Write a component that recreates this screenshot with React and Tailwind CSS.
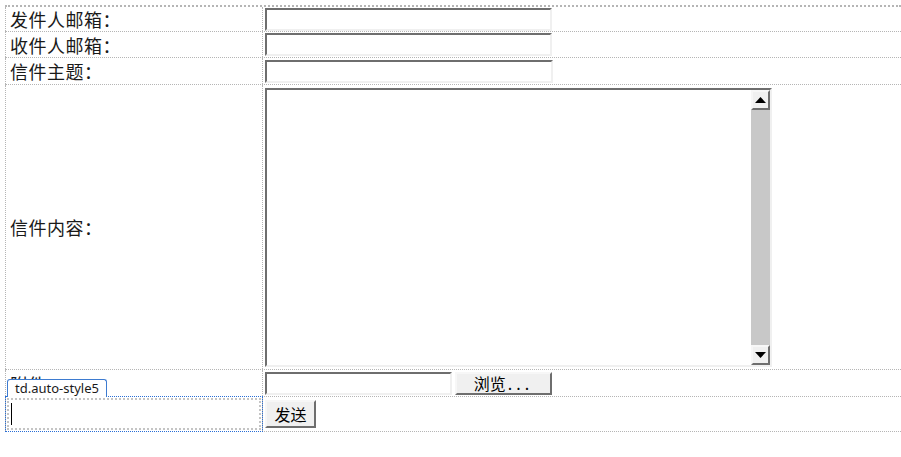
const cjk = { fontFamily: '"Noto Sans CJK SC", "Liberation Serif", serif' };

const Row = ({ h, label, children, top = false, left, middle = 'items-center' }) => (
  <div
    className={`grid grid-cols-[258px_1fr] border-b border-dotted border-[#b5b5b5] ${top ? 'border-t-2' : ''}`}
    style={{ height: h }}
  >
    <div className={`flex items-center pl-[4px] border-l border-r border-dotted border-[#b5b5b5] relative`}>
      {left || (
        <span className="text-[18px] leading-none text-[#1a1a1a] tracking-[0.5px]" style={cjk}>
          {label}
        </span>
      )}
    </div>
    <div className={`flex ${middle} pl-[2px]`}>{children}</div>
  </div>
);

const Inset = ({ w, h = 22 }) => (
  <div
    className="bg-white border-2 border-t-[#6e6e6e] border-l-[#6e6e6e] border-b-[#f0f0f0] border-r-[#f0f0f0]"
    style={{ width: w, height: h }}
  />
);

const Btn = ({ w, h, children, cls = '' }) => (
  <div
    className={`flex items-center justify-center bg-[#f0f0f0] border-2 border-t-[#f7f7f7] border-l-[#f7f7f7] border-b-[#6e6e6e] border-r-[#6e6e6e] text-[16px] text-black ${cls}`}
    style={{ width: w, height: h, ...cjk }}
  >
    {children}
  </div>
);

const Arrow = ({ up }) => (
  <div className="h-[20px] w-[19px] flex items-center justify-center bg-[#f0f0f0] border-2 border-t-[#f7f7f7] border-l-[#f7f7f7] border-b-[#6e6e6e] border-r-[#6e6e6e]">
    <svg width="11" height="6" viewBox="0 0 11 6">
      {up ? <polygon points="5.5,0 11,6 0,6" fill="#000" /> : <polygon points="0,0 11,0 5.5,6" fill="#000" />}
    </svg>
  </div>
);

export default function App() {
  return (
    <div className="w-[901px] h-[457px] bg-white overflow-hidden pt-[5px] pl-[5px]">
      <div className="w-[896px] border-dotted border-[#b5b5b5]">
        <Row h={27} label="发件人邮箱：" top>
          <Inset w={287} h={23} />
        </Row>
        <Row h={26} label="收件人邮箱：">
          <Inset w={287} h={23} />
        </Row>
        <Row h={27} label="信件主题：">
          <Inset w={288} h={23} />
        </Row>
        <Row h={285} label="信件内容：">
          <div className="flex w-[507px] h-[279px] bg-white border-2 border-t-[#6e6e6e] border-l-[#6e6e6e] border-b-[#f0f0f0] border-r-[#f0f0f0]">
            <div className="flex-1" />
            <div className="w-[19px] flex flex-col bg-[#c8c8c8]">
              <Arrow up />
              <div className="flex-1" />
              <Arrow />
            </div>
          </div>
        </Row>
        <Row
          h={27}
          left={
            <>
              <span className="text-[18px] leading-none text-[#1a1a1a] mt-[2px]" style={cjk}>
                附件：
              </span>
              <div
                className="absolute left-[1px] bottom-[-1px] h-[18px] px-[7px] flex items-center bg-white border border-b-0 border-[#3d7bd0] rounded-t-[3px] text-[13px] text-[#1a1a1a] z-10"
                style={{ fontFamily: '"Noto Sans", "Liberation Sans", sans-serif' }}
              >
                td.auto-style5
              </div>
            </>
          }
        >
          <Inset w={187} h={23} />
          <Btn w={97} h={23} cls="ml-[3px]">
            浏览<span className="tracking-[4px] ml-[2px]">...</span>
          </Btn>
        </Row>
        <Row
          h={35}
          middle="items-center"
          left={
            <div className="absolute inset-[-1px] border border-dotted border-[#2a6fd6] p-[1px]">
              <div className="h-full w-full border-2 border-dotted border-[#c4c4c4] flex items-center pl-[2px]">
                <div className="w-[1px] h-[22px] bg-black" />
              </div>
            </div>
          }
        >
          <Btn w={51} h={28}>发送</Btn>
        </Row>
      </div>
    </div>
  );
}
